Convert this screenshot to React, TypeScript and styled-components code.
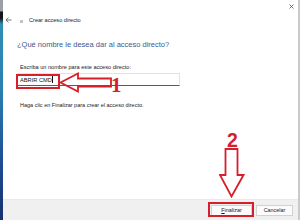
import React from "react";
import styled, { createGlobalStyle } from "styled-components";

const Global = createGlobalStyle`
  html, body { margin: 0; padding: 0; background: #ffffff; }
  body { font-family: "Liberation Sans", Arial, sans-serif; }
`;

const RED = "#d61f2a";

const Screen = styled.div`
  position: relative;
  width: 300px;
  height: 220px;
  display: flex;
  overflow: hidden;
  background: #ffffff;
`;

const DesktopStrip = styled.div`
  width: 3px;
  flex: none;
  background: linear-gradient(
    to bottom,
    #9aa0a6 0px,
    #9aa0a6 11px,
    #151515 12px,
    #151515 18px,
    #2f8fb5 24px,
    #2a7fb0 90px,
    #1f4f96 160px,
    #16306e 220px
  );
`;

const Dialog = styled.div`
  flex: 1;
  display: flex;
  flex-direction: column;
  border-right: 2px solid #cacaca;
  background: #ffffff;
`;

const TopBar = styled.div`
  height: 12px;
  display: flex;
  justify-content: flex-end;
  align-items: center;
  padding-right: 4px;
`;

const TitleRow = styled.div`
  height: 16px;
  display: flex;
  align-items: center;
  padding-left: 2px;
`;

const BackArrow = styled.svg`
  width: 7px;
  height: 6px;
  margin-right: 8px;
`;

const AppIcon = styled.div`
  width: 3px;
  height: 3px;
  background: #c4c4c4;
  margin-right: 6px;
  margin-top: 2px;
`;

const Title = styled.span`
  font-size: 5.6px;
  color: #1a1a1a;
  line-height: 8px;
`;

const Main = styled.div`
  display: flex;
  flex-direction: column;
  padding-left: 14px;
  flex: 1;
`;

const Heading = styled.div`
  margin-top: 11px;
  font-size: 7.5px;
  line-height: 12px;
  color: #3a5a90;
  white-space: nowrap;
`;

const Label = styled.div`
  margin-top: 12px;
  padding-left: 3px;
  font-size: 5.6px;
  line-height: 8px;
  color: #1a1a1a;
  white-space: nowrap;
`;

const Field = styled.div`
  margin-top: 2px;
  width: 163px;
  height: 13px;
  box-sizing: border-box;
  border: 1px solid #e2e2e2;
  border-bottom: 1px solid #2a6a92;
  display: flex;
  align-items: center;
  padding-left: 2px;
  font-size: 5.7px;
  color: #111;
`;

const Caret = styled.span`
  display: inline-block;
  width: 0.7px;
  height: 7px;
  background: #111;
  margin-left: 0.5px;
`;

const Info = styled.div`
  margin-top: 15px;
  padding-left: 3px;
  font-size: 5.5px;
  line-height: 8px;
  color: #1a1a1a;
  white-space: nowrap;
`;

const Footer = styled.div`
  height: 21px;
  flex: none;
  background: #f0f0f0;
  border-top: 1px solid #e9e9e9;
  box-sizing: border-box;
  display: flex;
  justify-content: flex-end;
  align-items: center;
  gap: 4px;
  padding-right: 5px;
`;

const Button = styled.div<{ $width: number }>`
  width: ${(p) => p.$width}px;
  height: 11px;
  box-sizing: border-box;
  border: 1px solid #d2d2d2;
  background: #fbfbfb;
  display: flex;
  align-items: center;
  justify-content: center;
  font-size: 5.4px;
  color: #1a1a1a;
`;

const Accel = styled.span`
  text-decoration: underline;
`;

const Annot = styled.div<{ $x: number; $y: number }>`
  position: absolute;
  left: ${(p) => p.$x}px;
  top: ${(p) => p.$y}px;
`;

const RedBox = styled(Annot)<{ $w: number; $h: number }>`
  width: ${(p) => p.$w}px;
  height: ${(p) => p.$h}px;
  box-sizing: border-box;
  border: 2px solid ${RED};
`;

const Number = styled(Annot)<{ $serif?: boolean; $size: number }>`
  font-family: ${(p) =>
    p.$serif ? '"Liberation Serif", "Times New Roman", serif' : '"Liberation Sans", Arial, sans-serif'};
  font-weight: bold;
  font-size: ${(p) => p.$size}px;
  line-height: 16px;
  color: ${RED};
`;

export default function App() {
  return (
    <>
      <Global />
      <Screen>
        <DesktopStrip />
        <Dialog>
          <TopBar>
            <svg width="5" height="5" viewBox="0 0 5 5">
              <path d="M0.5 0.5 L4.5 4.5 M4.5 0.5 L0.5 4.5" stroke="#555" strokeWidth="0.8" />
            </svg>
          </TopBar>
          <TitleRow>
            <BackArrow viewBox="0 0 7 6">
              <path d="M6.5 3 H1 M3.5 0.5 L1 3 L3.5 5.5" stroke="#444" strokeWidth="0.7" fill="none" />
            </BackArrow>
            <AppIcon />
            <Title>Crear acceso directo</Title>
          </TitleRow>
          <Main>
            <Heading>¿Qué nombre le desea dar al acceso directo?</Heading>
            <Label>Escriba un nombre para este acceso directo:</Label>
            <Field>
              ABRIR CMD
              <Caret />
            </Field>
            <Info>Haga clic en Finalizar para crear el acceso directo.</Info>
          </Main>
          <Footer>
            <Button $width={41}>
              <span>
                <Accel>F</Accel>inalizar
              </span>
            </Button>
            <Button $width={37}>Cancelar</Button>
          </Footer>
        </Dialog>

        <RedBox $x={16} $y={74} $w={44} $h={15} />
        <Annot $x={59} $y={72}>
          <svg width="54" height="21" viewBox="0 0 54 21">
            <path
              d="M1.5 10.5 L19 1.5 L19 6.5 L52 6.5 L52 14.5 L19 14.5 L19 19.5 Z"
              fill="none"
              stroke={RED}
              strokeWidth="1.8"
              strokeLinejoin="miter"
            />
          </svg>
        </Annot>
        <Number $x={111} $y={77} $serif $size={21}>
          1
        </Number>

        <Number $x={227} $y={132} $size={19.5}>
          2
        </Number>
        <Annot $x={219} $y={148}>
          <svg width="26" height="50" viewBox="0 0 26 50">
            <path
              d="M6.5 1 L18.5 1 L18.5 27 L24.5 27 L12.5 48.5 L1 27 L6.5 27 Z"
              fill="none"
              stroke={RED}
              strokeWidth="1.8"
            />
          </svg>
        </Annot>
        <RedBox $x={208} $y={202} $w={46} $h={15} />
      </Screen>
    </>
  );
}
